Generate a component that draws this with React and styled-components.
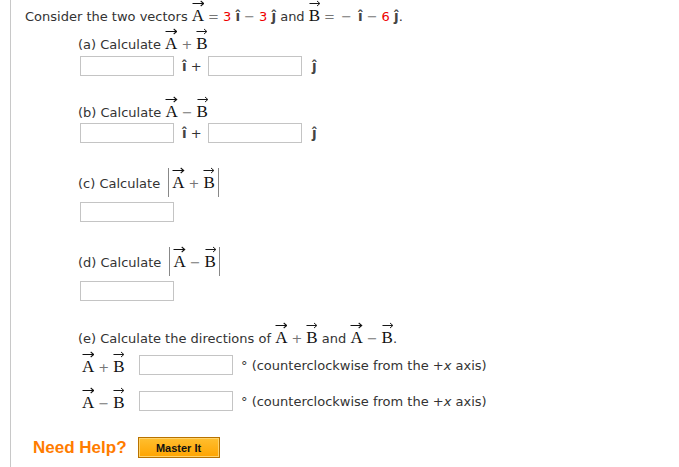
import React from 'react';
import styled, { createGlobalStyle } from 'styled-components';

const Global = createGlobalStyle`
  html, body { margin: 0; padding: 0; background: #fff; }
  body { font-family: "DejaVu Sans", Verdana, sans-serif; font-size: 13px; color: #333; }
`;

const Page = styled.div`
  height: 467px;
  margin-left: 10px;
  border-left: 1px solid #c8c8c8;
  padding: 7px 0 0 14px;
  box-sizing: border-box;
  overflow: hidden;
`;

const Line = styled.div`
  height: 18px;
  line-height: 18px;
  margin-left: ${p => p.indent || 0}px;
  margin-top: ${p => p.top || 0}px;
  white-space: nowrap;
`;

const Red = styled.span`
  color: #ee0000;
`;

const Op = styled.span`
  color: #777;
  margin: 0 ${p => p.sp ?? 4}px;
`;

const Hat = styled.span`
  font-weight: bold;
  font-size: 13.5px;
  color: #444;
`;

const VecWrap = styled.span`
  position: relative;
  font-family: "Liberation Serif", "Times New Roman", serif;
  font-size: 17px;
  color: #111;
`;

const Arrow = styled.svg`
  position: absolute;
  top: -6px;
  left: 0;
  width: 100%;
  height: 7px;
`;

const Vec = ({ l }) => (
  <VecWrap>
    <Arrow viewBox="0 0 12 7" preserveAspectRatio="none">
      <path d="M0.5 3.5 H11" stroke="#111" strokeWidth="1" fill="none" />
      <path d="M8.5 1 L11.5 3.5 L8.5 6" stroke="#111" strokeWidth="1" fill="none" />
    </Arrow>
    {l}
  </VecWrap>
);

const Abs = styled.span`
  border-left: 1px solid #888;
  border-right: 1px solid #888;
  padding: 8px 3px 6px 3px;
  margin-left: 4px;
`;

const Box = styled.input`
  width: 94px;
  height: 20px;
  box-sizing: border-box;
  border: 1px solid #c4c4c4;
  background: #fff;
  margin: 0;
  padding: 0;
  flex: none;
`;

const Row = styled.div`
  display: flex;
  align-items: center;
  margin-left: ${p => p.indent || 55}px;
  margin-top: ${p => p.top || 0}px;
  height: 20px;
  white-space: nowrap;
`;

const Unit = styled.span`
  display: inline-block;
  width: ${p => p.w}px;
  padding-left: ${p => p.pl || 0}px;
  box-sizing: border-box;
`;

const DirLabel = styled.span`
  display: inline-block;
  width: 57px;
  padding-top: 4px;
`;

const Help = styled.div`
  display: flex;
  align-items: center;
  gap: 11px;
  margin-left: 8px;
  margin-top: 26px;
`;

const NeedHelp = styled.span`
  font-family: "Liberation Sans", Arial, sans-serif;
  font-weight: bold;
  font-size: 17px;
  color: #ff7c00;
`;

const Master = styled.button`
  width: 82px;
  height: 21px;
  border: 1px solid #b87200;
  box-shadow: inset 0 0 0 1px #ffd36a;
  background: linear-gradient(#ffbf30, #ffa400);
  font-family: "Liberation Sans", Arial, sans-serif;
  font-weight: bold;
  font-size: 11px;
  color: #111;
  padding: 0;
`;

const Sum = ({ op }) => (
  <>
    <Vec l="A" /><Op>{op}</Op><Vec l="B" />
  </>
);

export default function App() {
  return (
    <>
      <Global />
      <Page>
        <Line>
          Consider the two vectors <Vec l="A" /><Op>=</Op><Red>3</Red> <Hat>î</Hat><Op>−</Op><Red>3</Red> <Hat>ĵ</Hat> and <Vec l="B" /><Op>=</Op><Op sp={2}>−</Op> <Hat>î</Hat><Op>−</Op><Red>6</Red> <Hat>ĵ</Hat>.
        </Line>

        <Line indent={53} top={10}>
          (a) Calculate <Sum op="+" />
        </Line>
        <Row top={3}>
          <Box /><Unit w={34} pl={8}><Hat>î</Hat> +</Unit><Box /><Unit w={20} pl={10}><Hat>ĵ</Hat></Unit>
        </Row>

        <Line indent={53} top={27}>
          (b) Calculate <Sum op="−" />
        </Line>
        <Row top={2}>
          <Box /><Unit w={34} pl={8}><Hat>î</Hat> +</Unit><Box /><Unit w={20} pl={10}><Hat>ĵ</Hat></Unit>
        </Row>

        <Line indent={53} top={31}>
          (c) Calculate <Abs><Sum op="+" /></Abs>
        </Line>
        <Row top={10}>
          <Box />
        </Row>

        <Line indent={53} top={31}>
          (d) Calculate <Abs><Sum op="−" /></Abs>
        </Line>
        <Row top={10}>
          <Box />
        </Row>

        <Line indent={53} top={28}>
          (e) Calculate the directions of <Sum op="+" /> and <Sum op="−" />.
        </Line>
        <Row indent={57} top={8}>
          <DirLabel><Sum op="+" /></DirLabel>
          <Box /><Unit w={280} pl={8}>° (counterclockwise from the +<i>x</i> axis)</Unit>
        </Row>
        <Row indent={57} top={16}>
          <DirLabel><Sum op="−" /></DirLabel>
          <Box /><Unit w={280} pl={8}>° (counterclockwise from the +<i>x</i> axis)</Unit>
        </Row>

        <Help>
          <NeedHelp>Need Help?</NeedHelp>
          <Master>Master It</Master>
        </Help>
      </Page>
    </>
  );
}
